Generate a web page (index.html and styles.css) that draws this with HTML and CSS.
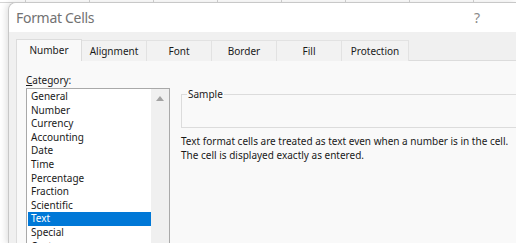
FILE: index.html
```html
<!DOCTYPE html>
<html>
<head>
<meta charset="utf-8">
<link rel="stylesheet" href="styles.css">
</head>
<body>
<div class="dialog">
  <div class="titlebar">
    <span class="title">Format Cells</span>
    <span class="help">?</span>
  </div>
  <div class="content">
    <div class="tabs">
      <div class="tab active">Number</div>
      <div class="tab">Alignment</div>
      <div class="tab">Font</div>
      <div class="tab">Border</div>
      <div class="tab">Fill</div>
      <div class="tab wide">Protection</div>
    </div>
    <div class="panel">
      <div class="left">
        <div class="label"><u>C</u>ategory:</div>
        <div class="listbox">
          <ul class="items">
            <li>General</li>
            <li>Number</li>
            <li>Currency</li>
            <li>Accounting</li>
            <li>Date</li>
            <li>Time</li>
            <li>Percentage</li>
            <li>Fraction</li>
            <li>Scientific</li>
            <li class="selected">Text</li>
            <li>Special</li>
            <li>Custom</li>
          </ul>
          <div class="scrollbar"><span class="arrow"></span></div>
        </div>
      </div>
      <div class="right">
        <fieldset class="sample">
          <legend>Sample</legend>
        </fieldset>
        <p class="desc">Text format cells are treated as text even when a number is in the cell.<br>The cell is displayed exactly as entered.</p>
      </div>
    </div>
  </div>
</div>
</body>
</html>
```
FILE: styles.css
```css
html, body {
  margin: 0;
  padding: 0;
  height: 243px;
  overflow: hidden;
}
body {
  background-color: #ffffff;
  background-image:
    repeating-linear-gradient(to right, transparent 0 25px, #d4d4d4 25px 26px, transparent 26px 64px),
    linear-gradient(to bottom, transparent 0 2px, #d4d4d4 2px 3px, transparent 3px);
  font-family: "Noto Sans", "Open Sans", sans-serif;
  font-size: 10px;
  color: #1a1a1a;
}
.dialog {
  margin: 2px 0 0 8px;
  height: 241px;
  background: #f0f0f0;
  border-top: 1px solid #c8c8c8;
  border-left: 1px solid #c8c8c8;
  border-top-left-radius: 8px;
  box-shadow: -2px 0 6px rgba(0,0,0,0.12);
  overflow: hidden;
}
.titlebar {
  height: 29px;
  background: #ffffff;
  display: flex;
  align-items: center;
  padding-left: 7px;
}
.title {
  font-size: 14px;
  color: #727272;
  letter-spacing: -0.3px;
}
.help {
  margin-left: auto;
  margin-right: 36px;
  font-size: 14px;
  color: #8a8a8a;
}
.content {
  padding: 8px 0 0 7px;
}
.tabs {
  display: flex;
  height: 21px;
  align-items: flex-end;
}
.tab {
  width: 64px;
  height: 20px;
  line-height: 20px;
  text-align: center;
  background: #f2f2f2;
  border: 1px solid #e2e2e2;
  border-bottom: none;
  margin-right: -1px;
  color: #1a1a1a;
}
.tab.wide {
  width: 66px;
}
.tab.active {
  height: 21px;
  line-height: 21px;
  background: #f9f9f9;
  border-color: #dcdcdc;
  position: relative;
  z-index: 1;
}
.panel {
  display: flex;
  background: #f9f9f9;
  border-top: 1px solid #dcdcdc;
  border-left: 1px solid #dcdcdc;
  height: 200px;
  margin-top: -1px;
}
.left {
  padding: 12px 0 0 9px;
}
.label {
  line-height: 14px;
  margin-bottom: 1px;
}
.listbox {
  display: flex;
  width: 142px;
  height: 160px;
  border: 1px solid #a9a9a9;
  background: #ffffff;
}
.items {
  list-style: none;
  margin: 0;
  padding: 1px 0 0 1px;
  width: 123px;
}
.items li {
  height: 13.6px;
  line-height: 13.6px;
  padding-left: 3px;
  white-space: nowrap;
}
.items li.selected {
  background: #0078d7;
  color: #ffffff;
}
.scrollbar {
  width: 18px;
  margin-left: auto;
  background: #f0f0f0;
  position: relative;
}
.arrow {
  position: absolute;
  left: 5px;
  top: 7px;
  width: 0;
  height: 0;
  border-left: 4px solid transparent;
  border-right: 4px solid transparent;
  border-bottom: 5px solid #a3a3a3;
}
.right {
  padding: 27px 0 0 11px;
  flex: 1;
}
.sample {
  box-sizing: border-box;
  margin: 0;
  padding: 0;
  height: 40px;
  border: 1px solid #dcdcdc;
  border-right: none;
}
.sample legend {
  margin-left: 5px;
  padding: 0 1px;
  line-height: 12px;
  color: #1a1a1a;
}
.desc {
  margin: 7px 0 0 0;
  line-height: 13.6px;
  white-space: nowrap;
}
```
